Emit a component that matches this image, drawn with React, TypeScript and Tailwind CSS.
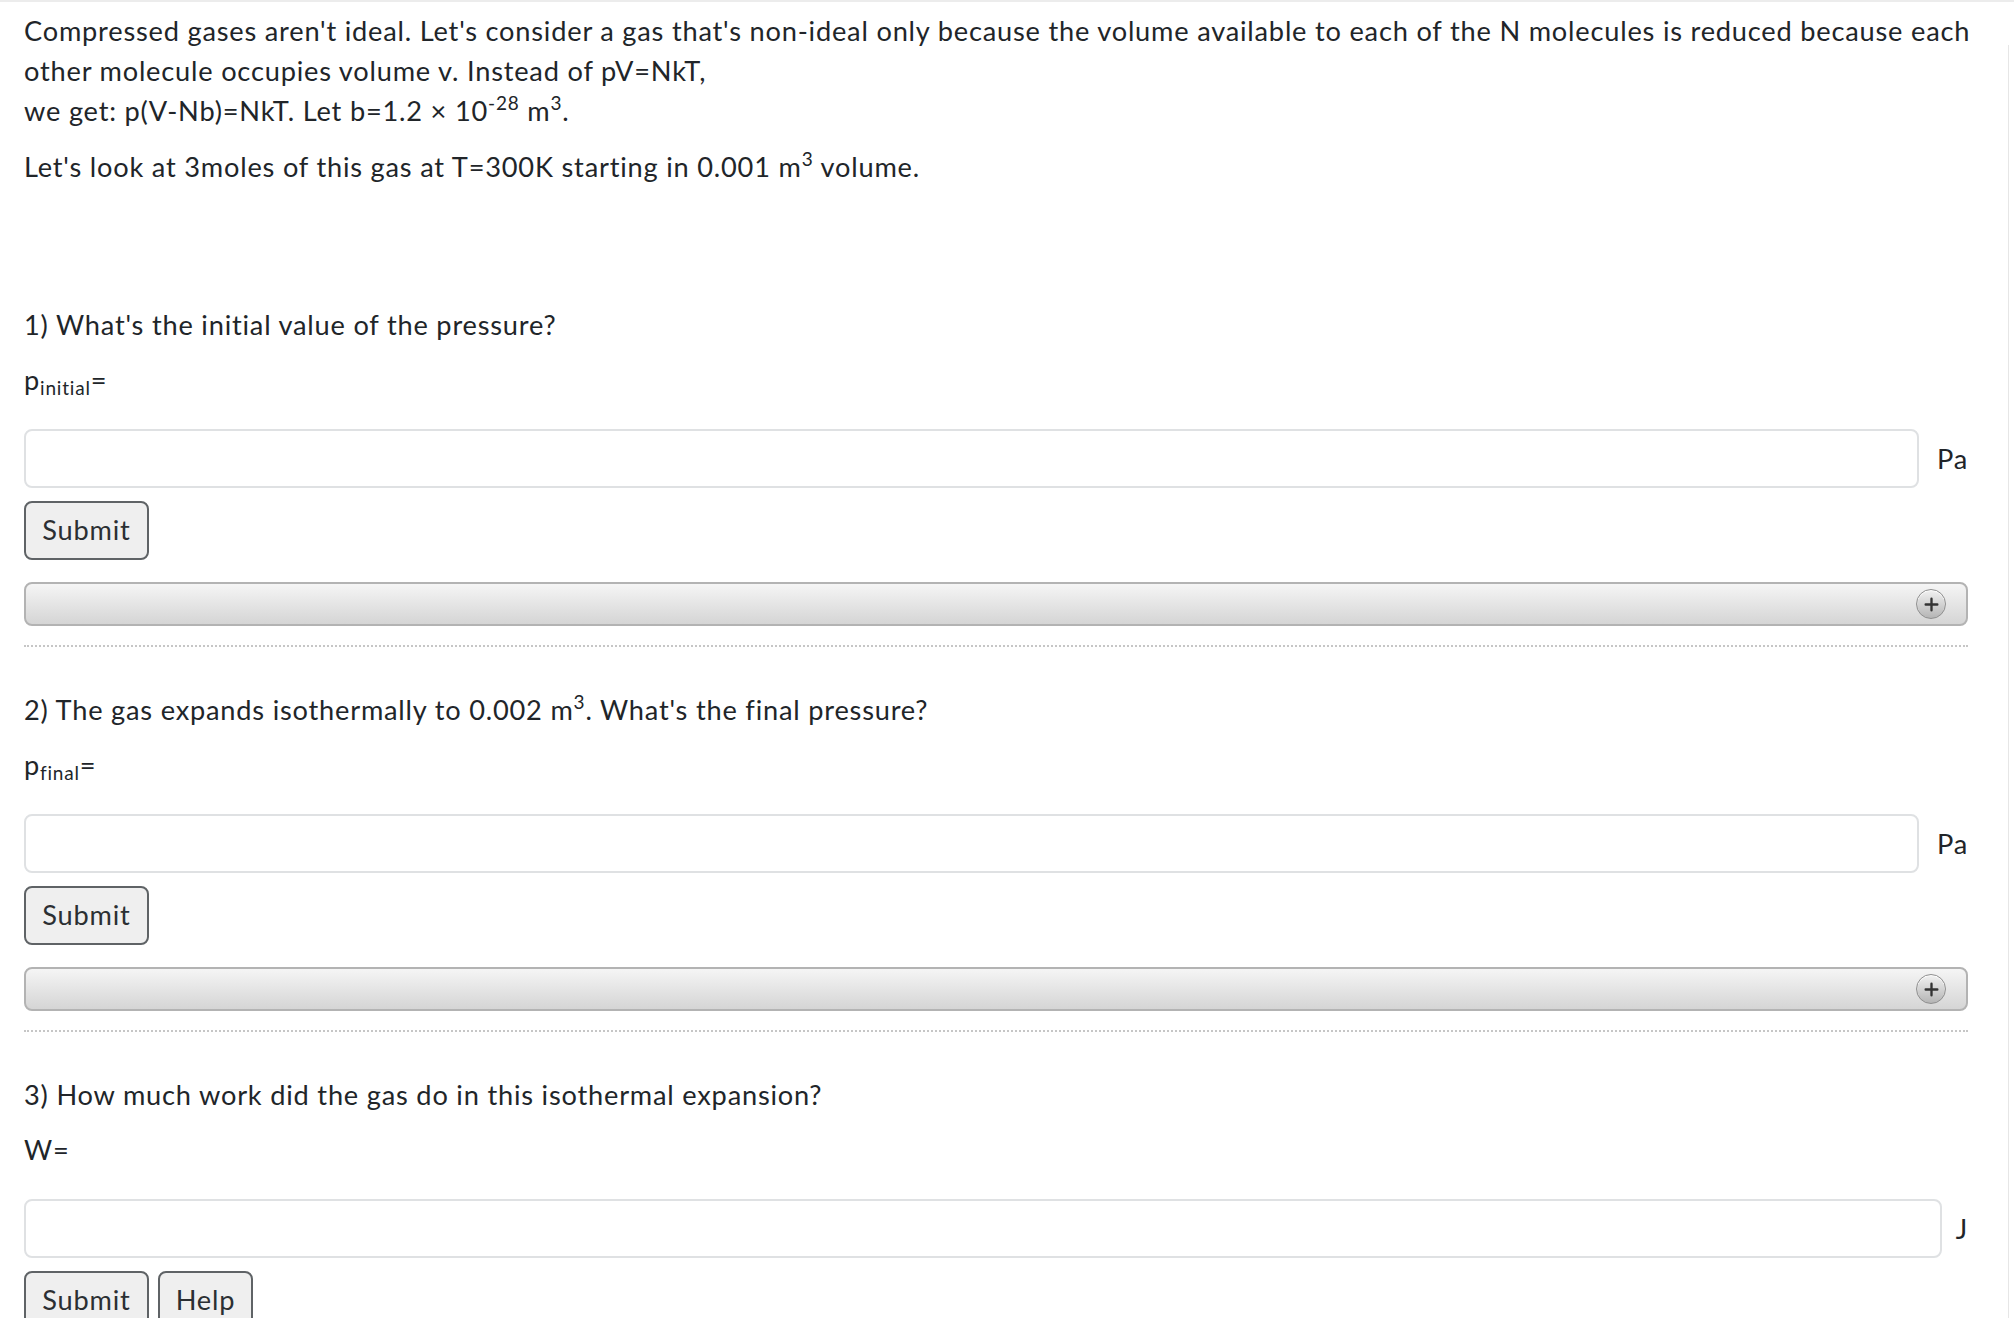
import React from "react";

function PlusIcon() {
  return (
    <div className="w-[30px] h-[30px] rounded-full border border-[#8f8f8f] bg-gradient-to-b from-[#f2f2f2] to-[#b5b5b5] flex items-center justify-center shadow-[inset_0_1px_1px_#fff]">
      <svg width="17" height="17" viewBox="0 0 16 16">
        <path d="M8 2.5v11M2.5 8h11" stroke="#333" strokeWidth="2.2" strokeLinecap="round" />
      </svg>
    </div>
  );
}

function Button({ children, w }: { children: React.ReactNode; w: string }) {
  return (
    <button
      className={`${w} h-[59px] rounded-[8px] border-2 border-[#5f6366] bg-[#efefef] text-[#2b2f33] flex items-center justify-center tracking-[0.8px]`}
    >
      {children}
    </button>
  );
}

function Sup({ children }: { children: React.ReactNode }) {
  return <sup className="text-[19px] leading-none relative -top-[11px] align-baseline">{children}</sup>;
}

function Question({
  title,
  label,
  unit,
  help,
  last,
}: {
  title: React.ReactNode;
  label: React.ReactNode;
  unit: string;
  help?: boolean;
  last?: boolean;
}) {
  return (
    <div className="flex flex-col">
      <div className="leading-[40px]">{title}</div>
      <div className="leading-[40px] mt-[15px]">{label}</div>
      <div className={`flex items-center mt-[29px] ${help ? "gap-[14px]" : "gap-[18px]"}`}>
        <div className="flex-1 h-[59px] rounded-[8px] border-2 border-[#dfe1e3] bg-white" />
        <span className="leading-[40px]">{unit}</span>
      </div>
      <div className="flex gap-[9px] mt-[13px]">
        <Button w="w-[125px]">Submit</Button>
        {help && <Button w="w-[95px]">Help</Button>}
      </div>
      {!last && (
        <>
          <div className="mt-[22px] h-[44px] rounded-[8px] border-2 border-[#b3b3b3] bg-gradient-to-b from-[#f5f5f5] to-[#d5d5d5] flex items-center justify-end pr-[20px]">
            <PlusIcon />
          </div>
          <div className="mt-[19px] border-t-2 border-dotted border-[#c6c6c6]" />
        </>
      )}
    </div>
  );
}

export default function App() {
  return (
    <div
      className="min-h-screen bg-white text-[#212529] text-[27.2px] tracking-[0.8px] relative"
      style={{ fontFamily: "Lato, 'Noto Sans', sans-serif" }}
    >
      <div className="h-[2px] bg-[#ececec]" />
      <div className="absolute top-[45px] right-[5px] w-px bottom-0 bg-[#e6e6e6]" />
      <div className="w-[1944px] ml-[24px] pt-[9px]">
        <p className="leading-[40px] whitespace-nowrap">
          Compressed gases aren't ideal. Let's consider a gas that's non-ideal only because the volume available to each of the N molecules is reduced because each
          <br />
          other molecule occupies volume v. Instead of pV=NkT,
          <br />
          we get: p(V-Nb)=NkT. Let b=1.2 × 10<Sup>-28</Sup> m<Sup>3</Sup>.
        </p>
        <p className="leading-[40px] mt-[16px]">
          Let's look at 3moles of this gas at T=300K starting in 0.001 m<Sup>3</Sup> volume.
        </p>

        <div className="mt-[118px]">
          <Question
            title="1) What's the initial value of the pressure?"
            label={
              <span>
                p<sub className="text-[19px] leading-none">initial</sub>=
              </span>
            }
            unit="Pa"
          />
        </div>
        <div className="mt-[43px]">
          <Question
            title={
              <span>
                2) The gas expands isothermally to 0.002 m<Sup>3</Sup>. What's the final pressure?
              </span>
            }
            label={
              <span>
                p<sub className="text-[19px] leading-none">final</sub>=
              </span>
            }
            unit="Pa"
          />
        </div>
        <div className="mt-[43px]">
          <Question
            title="3) How much work did the gas do in this isothermal expansion?"
            label="W="
            unit="J"
            help
            last
          />
        </div>
      </div>
    </div>
  );
}
